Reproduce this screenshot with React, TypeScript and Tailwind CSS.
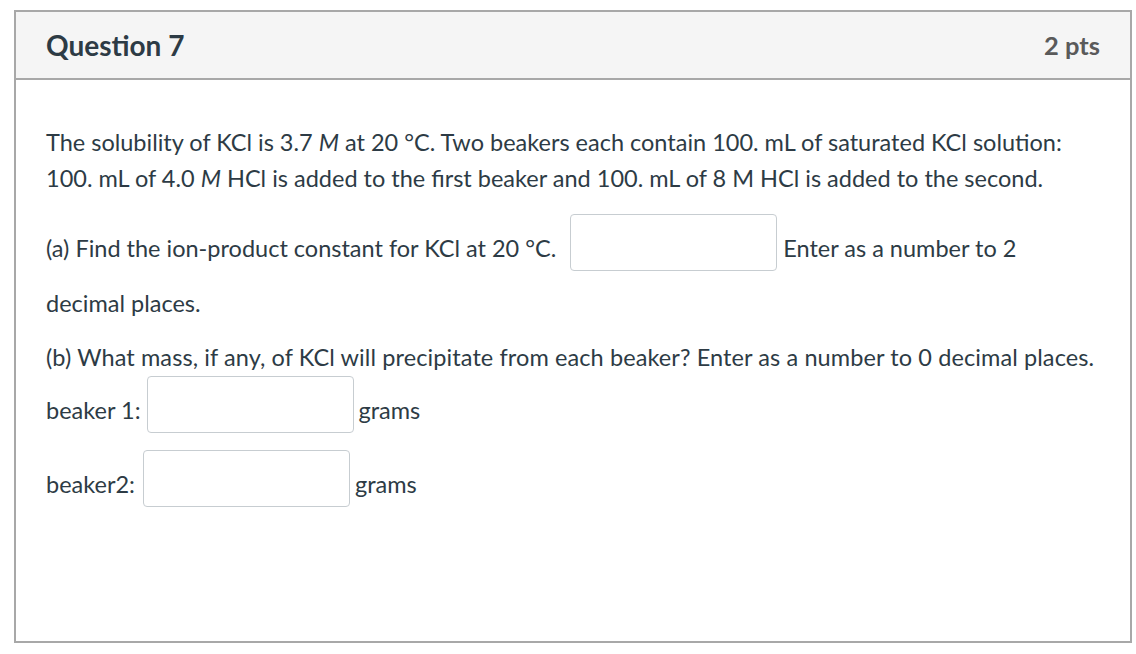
import { useState } from 'react';

export default function App() {
  const [answers, setAnswers] = useState({ a: '', b1: '', b2: '' });

  const inputCls =
    'shrink-0 w-[207px] h-[57px] border border-[#c7cdd1] rounded-[4px] bg-white px-2 text-[20px] outline-none';

  return (
    <div className="min-h-[654px] bg-white pt-[10px] pl-[14px] pr-[4px]" style={{ fontFamily: 'Lato, "Open Sans", sans-serif' }}>
      <div className="w-[1118px] h-[633px] border-2 border-[#a8a8a8] text-[#2d3b45] flex flex-col">
        {/* header */}
        <div className="h-[68px] shrink-0 bg-[#f5f5f5] border-b-2 border-[#a8a8a8] flex items-center justify-between px-[30px]">
          <h2 className="text-[28px] font-bold">Question 7</h2>
          <span className="text-[25.5px] font-bold text-[#5a5a5a]">2 pts</span>
        </div>

        {/* body */}
        <div className="px-[30px] pt-[44px] text-[23.5px] leading-[36px]">
          <p className="whitespace-nowrap">
            The solubility of KCl is 3.7 <i>M</i> at 20 °C. Two beakers each contain 100. mL of saturated KCl solution:
            <br />
            100. mL of 4.0 <i>M</i> HCl is added to the first beaker and 100. mL of 8 M HCl is added to the second.
          </p>

          {/* (a) */}
          <div className="mt-[18px] flex items-start whitespace-nowrap">
            <span className="pt-[16px]">(a) Find the ion-product constant for KCl at 20 °C.</span>
            <input
              className={`${inputCls} ml-[14px] mr-[6px]`}
              value={answers.a}
              onChange={e => setAnswers({ ...answers, a: e.target.value })}
            />
            <span className="pt-[16px]">Enter as a number to 2</span>
          </div>
          <p className="mt-[14px]">decimal places.</p>

          {/* (b) */}
          <p className="mt-[18px] whitespace-nowrap tracking-[0.1px]">
            (b) What mass, if any, of KCl will precipitate from each beaker? Enter as a number to 0 decimal places.
          </p>

          <div className="mt-[1px] flex items-start whitespace-nowrap">
            <span className="pt-[16px]">beaker 1:</span>
            <input
              className={`${inputCls} ml-[6px] mr-[5px]`}
              value={answers.b1}
              onChange={e => setAnswers({ ...answers, b1: e.target.value })}
            />
            <span className="pt-[16px]">grams</span>
          </div>

          <div className="mt-[17px] flex items-start whitespace-nowrap">
            <span className="pt-[16px]">beaker2:</span>
            <input
              className={`${inputCls} w-[206px] ml-[8px] mr-[5px]`}
              value={answers.b2}
              onChange={e => setAnswers({ ...answers, b2: e.target.value })}
            />
            <span className="pt-[16px]">grams</span>
          </div>
        </div>
      </div>
    </div>
  );
}
